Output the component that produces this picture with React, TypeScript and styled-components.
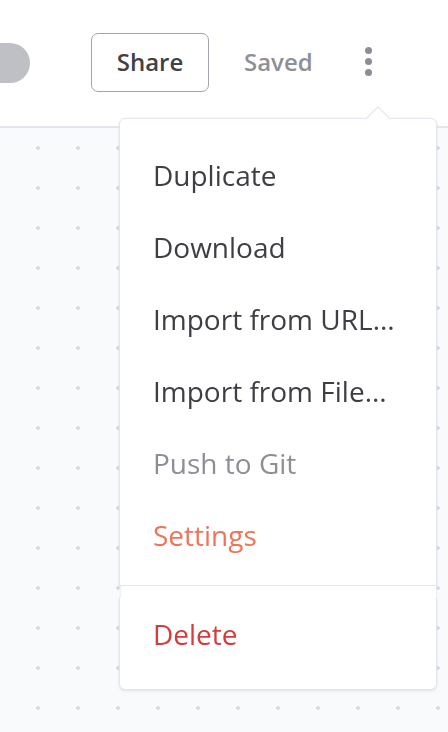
import styled, { createGlobalStyle } from "styled-components";

const GlobalStyle = createGlobalStyle`
  html, body {
    margin: 0;
    padding: 0;
    background: #ffffff;
  }
  body {
    font-family: "Open Sans", "Noto Sans", sans-serif;
  }
`;

type Tone = "normal" | "muted" | "accent" | "danger";

const items: { label: string; tone: Tone }[] = [
  { label: "Duplicate", tone: "normal" },
  { label: "Download", tone: "normal" },
  { label: "Import from URL...", tone: "normal" },
  { label: "Import from File...", tone: "normal" },
  { label: "Push to Git", tone: "muted" },
  { label: "Settings", tone: "accent" },
];

const App = () => {
  return (
    <>
      <GlobalStyle />
      <Page>
        <Header>
          <Pill />
          <ShareButton>Share</ShareButton>
          <SavedLabel>Saved</SavedLabel>
          <Kebab aria-label="More">
            <Dot />
            <Dot />
            <Dot />
          </Kebab>
        </Header>
        <Canvas />
        <Menu>
          <Caret />
          <TopGroup>
            {items.map((item) => (
              <MenuItem key={item.label} $tone={item.tone}>
                {item.label}
              </MenuItem>
            ))}
          </TopGroup>
          <Spacer />
          <BottomGroup>
            <MenuItem $tone="danger">Delete</MenuItem>
          </BottomGroup>
        </Menu>
      </Page>
    </>
  );
};

export default App;

const toneColor: Record<Tone, string> = {
  normal: "#3e3f44",
  muted: "#8e8f96",
  accent: "#ef7459",
  danger: "#d63a3c",
};

const Page = styled.div`
  position: relative;
  display: flex;
  flex-direction: column;
  width: 448px;
  height: 732px;
  overflow: hidden;
`;

const Header = styled.header`
  display: flex;
  align-items: center;
  height: 128px;
  padding-bottom: 1px;
  box-sizing: border-box;
  background: #ffffff;
  border-bottom: 2px solid #e3e6ee;
`;

const Pill = styled.div`
  width: 70px;
  height: 40px;
  margin-left: -40px;
  border-radius: 20px;
  background: #bfc0c5;
`;

const ShareButton = styled.button`
  margin-left: 61px;
  width: 118px;
  height: 59px;
  border: 1.5px solid #a2a5b0;
  border-radius: 7px;
  background: #ffffff;
  font-family: "Open Sans", "Noto Sans", sans-serif;
  font-size: 24px;
  font-weight: 600;
  color: #404146;
  padding: 0 0 2px;
`;

const SavedLabel = styled.span`
  margin-left: 35px;
  font-size: 24px;
  font-weight: 600;
  color: #8e8f96;
  padding-bottom: 2px;
`;

const Kebab = styled.div`
  display: flex;
  flex-direction: column;
  gap: 4px;
  margin-left: 52px;
  padding-bottom: 2px;
`;

const Dot = styled.span`
  width: 7px;
  height: 7px;
  border-radius: 50%;
  background: #8d8e95;
`;

const Canvas = styled.main`
  flex: 1;
  background-color: #f9fafc;
  background-image: radial-gradient(circle, #d9dbe4 1.6px, transparent 2px);
  background-size: 40px 40px;
  background-position: 18px 0;
`;

const Menu = styled.div`
  position: absolute;
  top: 118px;
  left: 119px;
  width: 318px;
  display: flex;
  flex-direction: column;
  filter: drop-shadow(0 1px 1px rgba(200, 204, 216, 0.5));
`;

const Caret = styled.div`
  position: absolute;
  top: -8px;
  left: 250px;
  width: 17px;
  height: 17px;
  background: #ffffff;
  border-top: 1.5px solid #e3e6ee;
  border-left: 1.5px solid #e3e6ee;
  transform: rotate(45deg);
  z-index: 1;
`;

const TopGroup = styled.ul`
  list-style: none;
  margin: 0;
  padding: 20px 0 14px;
  background: #ffffff;
  border: 1.5px solid #e3e6ee;
  border-radius: 6px 6px 0 0;
`;

const Spacer = styled.div`
  height: 12px;
  margin: 0 1.5px;
  background: #ffffff;
`;

const BottomGroup = styled.ul`
  list-style: none;
  margin: 0;
  padding: 0 0 19px;
  background: #ffffff;
  border: 1.5px solid #e3e6ee;
  border-top: none;
  border-radius: 0 0 6px 6px;
`;

const MenuItem = styled.li<{ $tone: Tone }>`
  display: flex;
  align-items: center;
  height: 72px;
  padding-left: 33px;
  font-size: 28px;
  color: ${(p) => toneColor[p.$tone]};
  white-space: nowrap;
`;
